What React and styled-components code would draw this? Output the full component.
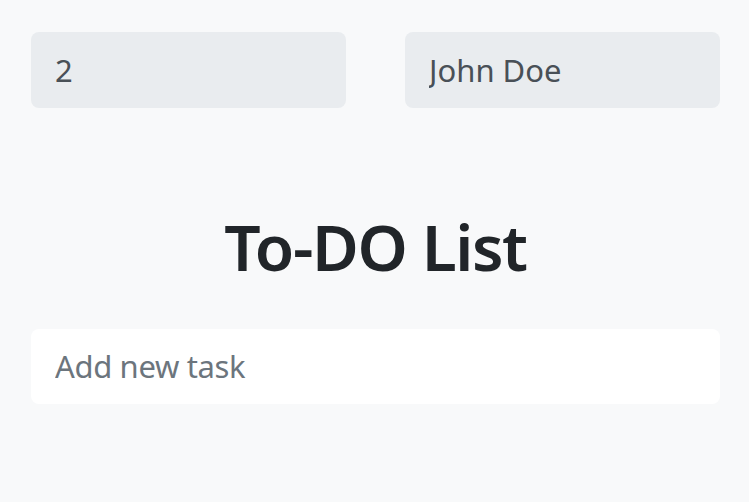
import styled, { createGlobalStyle } from "styled-components";

const GlobalStyle = createGlobalStyle`
    html, body {
        margin: 0;
        padding: 0;
        background-color: #f8f9fa;
    }
    body {
        font-family: "Noto Sans", "Open Sans", "Liberation Sans", sans-serif;
        color: #212529;
    }
`;

// 전체 페이지
const Page = styled.div`
    width: 749px;
    height: 502px;
    box-sizing: border-box;
    padding: 32px 29px 0 31px;
`;

// 상단 두 칸
const TopRow = styled.div`
    display: grid;
    grid-template-columns: 1fr 1fr;
    gap: 59px;
`;

const Field = styled.input`
    display: block;
    width: 100%;
    height: ${props => props.h || "76px"};
    box-sizing: border-box;
    padding: 0 24px;
    border: none;
    border-radius: 8px;
    outline: none;
    font-family: inherit;
    font-size: 31px;
    color: #495057;
    background-color: ${props => props.bg || "#e9ecef"};
    opacity: 1;

    &::placeholder {
        color: #6c757d;
        opacity: 1;
        letter-spacing: -0.35px;
    }

    &:disabled {
        color: #495057;
        -webkit-text-fill-color: #495057;
    }
`;

const Title = styled.h1`
    margin: 101px 0 43px;
    text-align: center;
    font-size: 64px;
    font-weight: 600;
    letter-spacing: -1.4px;
    line-height: 1.2;
    color: #212529;
`;

function App() {
    return (
        <>
            <GlobalStyle />
            <Page>
                <TopRow>
                    <Field value="2" disabled readOnly />
                    <Field value="John Doe" disabled readOnly />
                </TopRow>
                <Title>To-DO List</Title>
                <Field bg="#ffffff" h="75px" placeholder="Add new task" />
            </Page>
        </>
    );
}

export default App;
